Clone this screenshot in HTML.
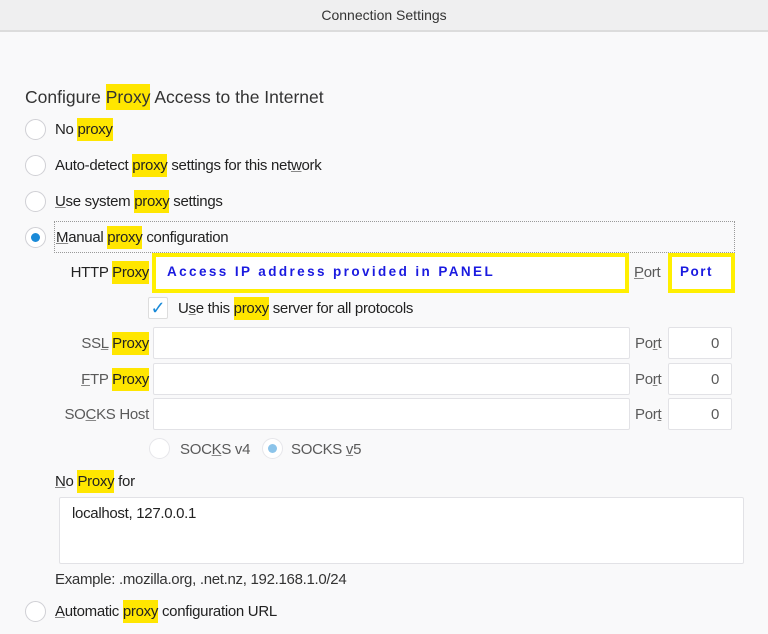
<!DOCTYPE html>
<html><head><style>
body{margin:0;width:768px;height:634px;overflow:hidden;background:#f9f9fa;font-family:"Liberation Sans",sans-serif;color:#222;position:relative}
.a{position:absolute;white-space:nowrap}
.t{font-size:15px;letter-spacing:-0.3px}
.h{background:#ffe600;padding:3px 0}
.r{position:absolute;width:19px;height:19px;border:1px solid #d0d0d5;border-radius:50%;background:#fff}
.in{position:absolute;background:#fff;border:1px solid #e2e2e6;border-radius:2px}
.g{color:#5a5a5a}
u{text-decoration:underline;text-decoration-color:#888}
</style></head><body>
<div class="a" style="left:0;top:0;width:768px;height:30px;background:#efeff0;border-bottom:2px solid #dcdcdc"></div>
<div class="a" style="left:0;width:768px;top:7px;text-align:center;font-size:14px;color:#333">Connection Settings</div>
<div class="a" style="left:25px;top:87px;font-size:17.5px;color:#333">Configure <span class="h">Proxy</span> Access to the Internet</div>
<div class="r" style="left:25px;top:119px"></div>
<div class="a t" style="left:55px;top:121px">No <span class="h">proxy</span></div>
<div class="r" style="left:25px;top:155px"></div>
<div class="a t" style="left:55px;top:157px">Auto-detect <span class="h">proxy</span> settings for this net<u>w</u>ork</div>
<div class="r" style="left:25px;top:191px"></div>
<div class="a t" style="left:55px;top:193px"><u>U</u>se system <span class="h">proxy</span> settings</div>
<div class="a" style="left:54px;top:221px;width:679px;height:30px;border:1px dotted #999"></div>
<div class="r" style="left:25px;top:227px"></div>
<div class="a" style="left:31px;top:233px;width:9px;height:9px;border-radius:50%;background:#1a8ad8"></div>
<div class="a t" style="left:56px;top:229px"><u>M</u>anual <span class="h">proxy</span> configuration</div>

<div class="a t" style="right:619px;top:264px">HTTP <span class="h">Proxy</span></div>
<div class="a" style="left:152px;top:253px;width:469px;height:32px;background:#fff;border:4px solid #ffef00"></div>
<div class="a" style="left:167px;top:264px;font-size:13.5px;font-weight:bold;color:#1a1ae0;letter-spacing:2.4px">Access IP address provided in PANEL</div>
<div class="a t g" style="left:634px;top:264px"><u>P</u>ort</div>
<div class="a" style="left:668px;top:253px;width:59px;height:32px;background:#fff;border:4px solid #ffef00"></div>
<div class="a" style="left:680px;top:264px;font-size:13.5px;font-weight:bold;color:#1a1ae0;letter-spacing:1.5px">Port</div>

<div class="a" style="left:148px;top:297px;width:18px;height:20px;border:1px solid #ddd;border-radius:2px;background:#fff;color:#1a8ad8;font-size:18px;line-height:20px;text-align:center">✓</div>
<div class="a t" style="left:178px;top:300px">U<u>s</u>e this <span class="h">proxy</span> server for all protocols</div>

<div class="a t g" style="right:619px;top:335px">SS<u>L</u> <span class="h" style="color:#222">Proxy</span></div>
<div class="in" style="left:153px;top:327px;width:475px;height:30px"></div>
<div class="a t g" style="left:635px;top:335px">Po<u>r</u>t</div>
<div class="in" style="left:668px;top:327px;width:62px;height:30px"></div>
<div class="a t g" style="left:711px;top:335px">0</div>

<div class="a t g" style="right:619px;top:371px"><u>F</u>TP <span class="h" style="color:#222">Proxy</span></div>
<div class="in" style="left:153px;top:363px;width:475px;height:30px"></div>
<div class="a t g" style="left:635px;top:371px">Po<u>r</u>t</div>
<div class="in" style="left:668px;top:363px;width:62px;height:30px"></div>
<div class="a t g" style="left:711px;top:371px">0</div>

<div class="a t g" style="right:619px;top:406px">SO<u>C</u>KS Host</div>
<div class="in" style="left:153px;top:398px;width:475px;height:30px"></div>
<div class="a t g" style="left:635px;top:406px">Por<u>t</u></div>
<div class="in" style="left:668px;top:398px;width:62px;height:30px"></div>
<div class="a t g" style="left:711px;top:406px">0</div>

<div class="r" style="left:149px;top:438px;border-color:#e6e6ea"></div>
<div class="a t g" style="left:180px;top:441px">SOC<u>K</u>S v4</div>
<div class="r" style="left:262px;top:438px;border-color:#e6e6ea"></div>
<div class="a" style="left:268px;top:444px;width:9px;height:9px;border-radius:50%;background:#8cc4ea"></div>
<div class="a t g" style="left:291px;top:441px">SOCKS <u>v</u>5</div>

<div class="a t" style="left:55px;top:473px"><u>N</u>o <span class="h">Proxy</span> for</div>
<div class="in" style="left:59px;top:497px;width:683px;height:65px"></div>
<div class="a t" style="left:72px;top:505px">localhost, 127.0.0.1</div>
<div class="a t" style="left:55px;top:571px;color:#333">Example: .mozilla.org, .net.nz, 192.168.1.0/24</div>
<div class="r" style="left:25px;top:601px"></div>
<div class="a t" style="left:55px;top:603px"><u>A</u>utomatic <span class="h">proxy</span> configuration URL</div>
</body></html>
